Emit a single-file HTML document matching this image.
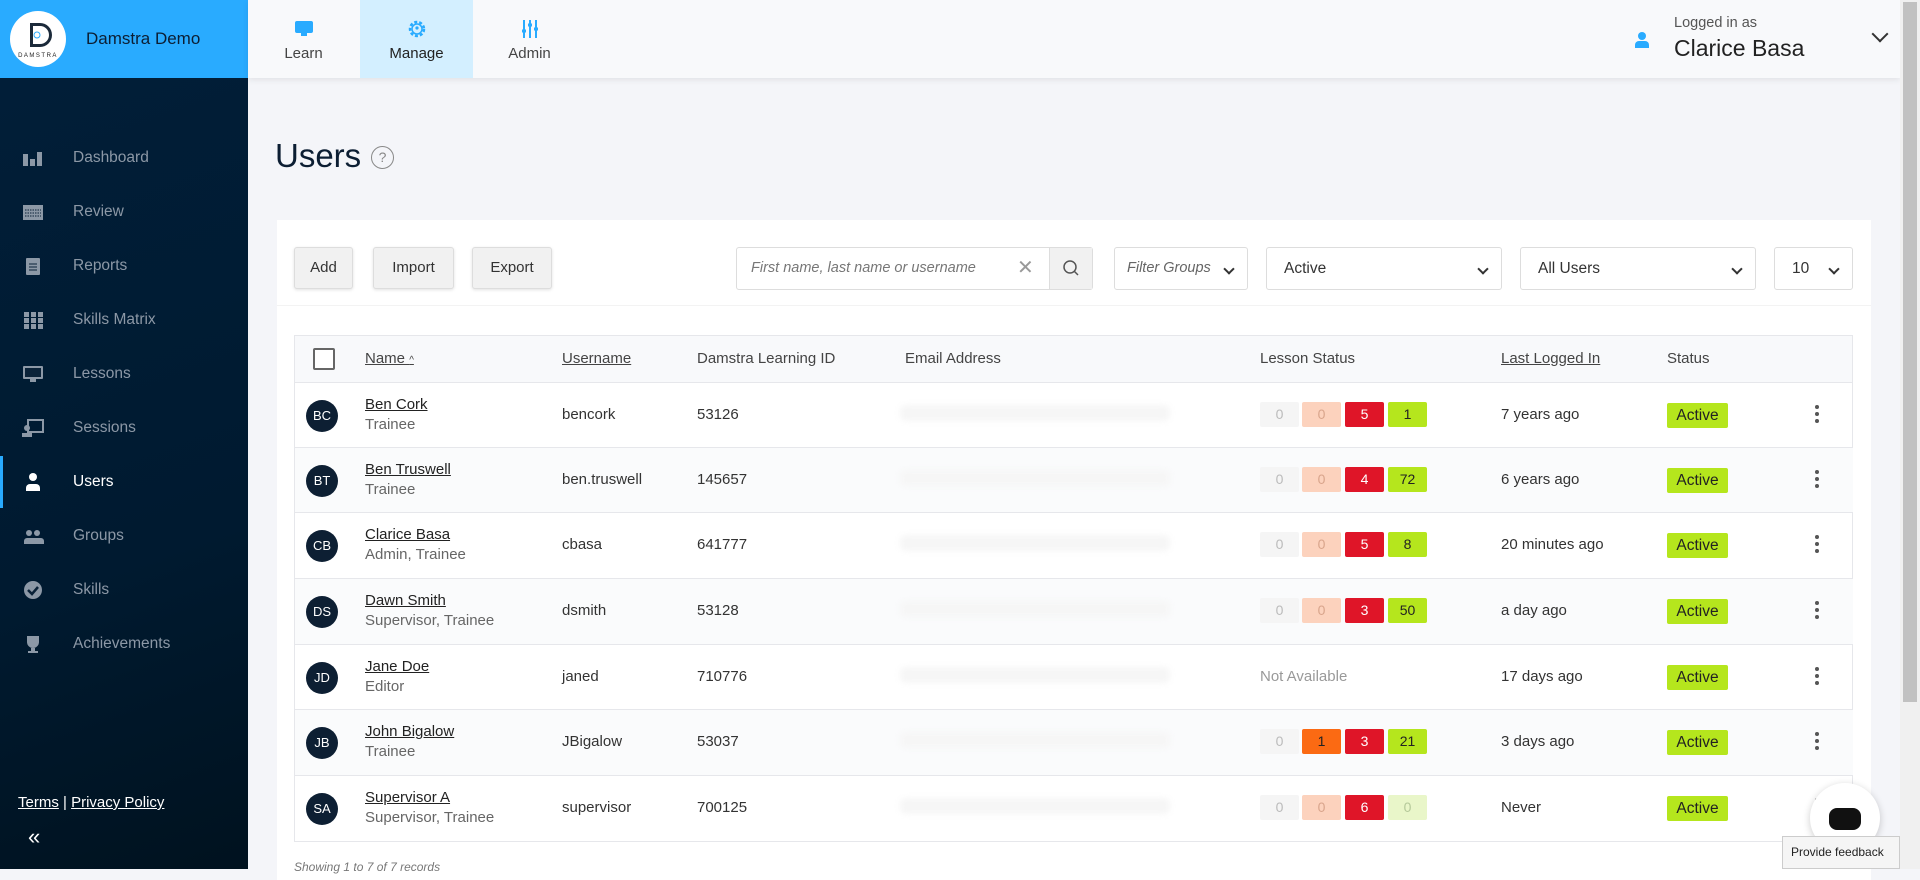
<!DOCTYPE html>
<html><head><meta charset="utf-8"><style>
*{box-sizing:border-box;margin:0;padding:0}
body{width:1920px;height:869px;overflow:hidden;font-family:"Liberation Sans",sans-serif;background:#f4f5f9;position:relative;color:#333}
.abs{position:absolute}
#logo{left:0;top:0;width:248px;height:78px;background:#29abff}
#side{left:0;top:78px;width:248px;height:791px;background:linear-gradient(160deg,#011e38,#001a30 60%,#00121f)}
#top{left:248px;top:0;width:1652px;height:78px;background:#f8f9fb;box-shadow:0 2px 6px rgba(0,0,0,.08)}
.tab{position:absolute;top:0;height:78px;text-align:center;font-size:15px;color:#444}
.tab svg{display:block;margin:19px auto 6px}
.nav{position:absolute;left:0;width:248px;height:52px;font-size:15.5px;color:#8c98a6}
.nav span{position:absolute;left:73px;top:50%;transform:translateY(-50%)}
.nav i{position:absolute;left:22px;top:50%;transform:translateY(-50%);width:22px;height:18px;display:block}
.btn{position:absolute;top:247px;height:42px;background:#f1f1f1;border:1px solid #ddd;border-radius:3px;font-size:15px;text-align:center;line-height:40px;color:#333;box-shadow:0 1px 3px rgba(0,0,0,.12)}
.sel{position:absolute;top:247px;height:43px;background:#fff;border:1px solid #ddd;border-radius:3px;font-size:15.5px;line-height:41px;padding-left:17px;color:#333}
.sel:after{content:"";position:absolute;right:14px;top:17px;width:6px;height:6px;border-right:2px solid #333;border-bottom:2px solid #333;transform:rotate(45deg)}
.row{position:absolute;left:295px;width:1558px;height:66px;border-top:1px solid #e6e7eb;font-size:15px;color:#333}
.row div{position:absolute}
.av{left:11px;top:17px;width:32px;height:32px;border-radius:50%;background:#0d1f33;color:#fff;font-size:13px;text-align:center;line-height:32px}
.nm{left:70px;top:13px;text-decoration:underline;color:#222}
.rl{left:70px;top:33px;color:#666}
.mid{top:23px}
.blur{left:605px;top:22px;width:270px;height:16px;background:#f6f6f6;border-radius:6px;filter:blur(3px)}
.b{top:19px;width:39px;height:25px;border-radius:2px;font-size:14px;text-align:center;line-height:25px}
.b0{background:#f5f5f5;color:#bbb}.b1{background:#fcd2bd;color:#d9a58c}.b2{background:#df1528;color:#fff}.b3{background:#b5e61d;color:#222}.b4{background:#e9f6c9;color:#b5c99a}.bo{background:#fb6a13;color:#222}
.act{left:1372px;top:20px;width:61px;height:25px;background:#b5e61d;color:#222;border-radius:2px;text-align:center;line-height:25px;font-size:15.5px}
.dots{left:1520px;top:22px;width:4px}
.dots b{display:block;width:4px;height:4px;border-radius:50%;background:#555;margin-bottom:3px}
</style></head><body>
<div class="abs" id="logo">
 <div class="abs" style="left:10px;top:11px;width:56px;height:56px;border-radius:50%;background:#fff">
  <svg width="56" height="56" viewBox="0 0 56 56"><path d="M20 12h10a12 12 0 0 1 0 24h-10z M23 15v18h7a9 9 0 0 0 0-18z" fill="#1b2a3a" fill-rule="evenodd"/><circle cx="27" cy="24" r="3" fill="none" stroke="#29abff"/><text x="28" y="46" font-size="6" text-anchor="middle" font-family="Liberation Sans" letter-spacing="1.5" fill="#222">DAMSTRA</text></svg>
 </div>
 <div class="abs" style="left:86px;top:29px;font-size:17px;color:#0c1e33">Damstra Demo</div>
</div>
<div class="abs" id="top">
 <div class="tab" style="left:0;width:111px"><svg width="20" height="20" viewBox="0 0 20 20"><rect x="1" y="2" width="18" height="12" rx="2" fill="#29abff"/><rect x="7" y="14" width="6" height="3" fill="#29abff"/></svg>Learn</div>
 <div class="tab" style="left:112px;width:113px;background:#d3efff;color:#222"><svg width="20" height="20" viewBox="0 0 20 20"><circle cx="10" cy="10" r="7" fill="none" stroke="#29abff" stroke-width="2.5" stroke-dasharray="3 2"/><circle cx="10" cy="10" r="5" fill="none" stroke="#29abff" stroke-width="1.5"/><circle cx="10" cy="9" r="1.6" fill="#29abff"/></svg>Manage</div>
 <div class="tab" style="left:225px;width:113px"><svg width="20" height="20" viewBox="0 0 20 20" stroke="#29abff" stroke-width="2"><path d="M4 1v18M10 1v18M16 1v18"/><path d="M2 12h4M8 6h4M14 10h4" stroke-width="3"/></svg>Admin</div>
 <svg class="abs" style="left:1387px;top:32px" width="14" height="16" viewBox="0 0 14 16"><circle cx="7" cy="4" r="4" fill="#29abff"/><path d="M0 16v-3a4 4 0 0 1 4-4h6a4 4 0 0 1 4 4v3z" fill="#29abff"/></svg>
 <div class="abs" style="left:1426px;top:15px;font-size:14.5px;color:#555">Logged in as</div>
 <div class="abs" style="left:1426px;top:35px;font-size:23px;color:#222">Clarice Basa</div>
 <div class="abs" style="left:1626px;top:28px;width:12px;height:12px;border-right:2px solid #333;border-bottom:2px solid #333;transform:rotate(45deg)"></div>
</div>
<div class="abs" style="left:1900px;top:0;width:20px;height:869px;background:#f0f0f0"><div style="position:absolute;left:3px;top:2px;width:14px;height:700px;background:#c1c1c1"></div></div>
<div class="abs" id="side">
 <div class="nav" style="top:54px"><i><svg width="22" height="18"><path d="M1 5h5v12H1zM8 10h5v7H8zM15 3h5v14h-5z" fill="#8c98a6"/></svg></i><span>Dashboard</span></div>
 <div class="nav" style="top:108px"><i><svg width="22" height="18"><rect x="1" y="2" width="20" height="15" fill="#8c98a6"/><path d="M3 7h16M3 10h16M3 13h16" stroke="#0a2238" stroke-dasharray="1.5 1"/></svg></i><span>Review</span></div>
 <div class="nav" style="top:162px"><i><svg width="22" height="18"><rect x="4" y="1" width="14" height="17" rx="1" fill="#8c98a6"/><path d="M7 7h8M7 10h8M7 13h8" stroke="#0a2238"/></svg></i><span>Reports</span></div>
 <div class="nav" style="top:216px"><i><svg width="22" height="18"><path d="M2 1h5v5H2zM9 1h5v5H9zM16 1h5v5h-5zM2 7h5v5H2zM9 7h5v5H9zM16 7h5v5h-5zM2 13h5v5H2zM9 13h5v5H9zM16 13h5v5h-5z" fill="#8c98a6"/></svg></i><span>Skills Matrix</span></div>
 <div class="nav" style="top:270px"><i><svg width="22" height="18"><rect x="1" y="1" width="20" height="13" rx="1" fill="#8c98a6"/><rect x="3" y="3" width="16" height="9" fill="#0a2238"/><rect x="8" y="14" width="6" height="3" fill="#8c98a6"/></svg></i><span>Lessons</span></div>
 <div class="nav" style="top:324px"><i><svg width="22" height="18"><rect x="6" y="1" width="15" height="12" fill="none" stroke="#8c98a6" stroke-width="2"/><circle cx="5" cy="9" r="3" fill="#8c98a6"/><path d="M0 18v-4h10v4z" fill="#8c98a6"/></svg></i><span>Sessions</span></div>
 <div class="nav" style="top:378px;color:#fff"><div style="position:absolute;left:0;top:0;width:3px;height:52px;background:#29abff"></div><i><svg width="22" height="18"><circle cx="11" cy="4" r="4" fill="#fff"/><path d="M4 18v-3a4 4 0 0 1 4-4h6a4 4 0 0 1 4 4v3z" fill="#fff"/></svg></i><span>Users</span></div>
 <div class="nav" style="top:432px"><i><svg width="22" height="18"><circle cx="7" cy="6" r="3" fill="#8c98a6"/><circle cx="15" cy="6" r="3" fill="#8c98a6"/><path d="M2 17v-3a3 3 0 0 1 3-3h14a3 3 0 0 1 3 3v3z" fill="#8c98a6"/></svg></i><span>Groups</span></div>
 <div class="nav" style="top:486px"><i><svg width="22" height="18"><circle cx="11" cy="9" r="9" fill="#8c98a6"/><path d="M6 9l4 4 6-7" stroke="#0a2238" stroke-width="2.5" fill="none"/></svg></i><span>Skills</span></div>
 <div class="nav" style="top:540px"><i><svg width="22" height="18"><path d="M5 1h12v6a6 6 0 0 1-12 0zM9 13h4v3h3v2H6v-2h3z" fill="#8c98a6"/></svg></i><span>Achievements</span></div>
 <div class="abs" style="left:18px;top:716px;font-size:15px;color:#fff"><u>Terms</u> | <u>Privacy Policy</u></div>
 <div class="abs" style="left:28px;top:746px;font-size:22px;color:#fff">«</div>
</div>
<div class="abs" style="left:275px;top:137px;font-size:33px;color:#0c1e33">Users</div>
<div class="abs" style="left:371px;top:146px;width:23px;height:23px;border:1.5px solid #888;border-radius:50%;font-size:14px;color:#888;text-align:center;line-height:20px">?</div>
<div class="abs" style="left:277px;top:220px;width:1594px;height:660px;background:#fff"></div>
<div class="abs" style="left:277px;top:305px;width:1594px;height:1px;background:#f3f3f3"></div>
<div class="btn" style="left:294px;width:59px">Add</div>
<div class="btn" style="left:373px;width:81px">Import</div>
<div class="btn" style="left:472px;width:80px">Export</div>
<div class="abs" style="left:736px;top:247px;width:357px;height:43px;background:#fff;border:1px solid #ddd;border-radius:3px;font-size:14.5px;line-height:41px;padding-left:14px;font-style:italic;color:#777">First name, last name or username
 <span style="position:absolute;left:280px;top:0;font-size:20px;color:#999;font-style:normal">✕</span>
 <div style="position:absolute;right:0;top:0;width:43px;height:41px;background:#f1f1f1;border-left:1px solid #ddd"><svg width="43" height="41"><circle cx="20" cy="19" r="6" fill="none" stroke="#555" stroke-width="1.5"/><path d="M24 23l4 4" stroke="#555" stroke-width="1.5"/></svg></div>
</div>
<div class="sel" style="left:1114px;width:134px;font-style:italic;color:#666;font-size:14.5px;padding-left:12px">Filter Groups</div>
<div class="sel" style="left:1266px;width:236px">Active</div>
<div class="sel" style="left:1520px;width:236px">All Users</div>
<div class="sel" style="left:1774px;width:79px">10</div>
<div class="abs" style="left:294px;top:335px;width:1559px;height:507px;border:1px solid #e6e7eb"></div>
<div class="abs" style="left:295px;top:336px;width:1557px;height:46px;background:#f8f9fb;font-size:15px;color:#444">
 <div class="abs" style="left:18px;top:12px;width:22px;height:22px;border:2px solid #666;border-radius:2px;background:#fff"></div>
 <div class="abs" style="left:70px;top:14px;text-decoration:underline">Name <span style="font-size:10px;text-decoration:none">^</span></div>
 <div class="abs" style="left:267px;top:14px;text-decoration:underline">Username</div>
 <div class="abs" style="left:402px;top:14px">Damstra Learning ID</div>
 <div class="abs" style="left:610px;top:14px">Email Address</div>
 <div class="abs" style="left:965px;top:14px">Lesson Status</div>
 <div class="abs" style="left:1206px;top:14px;text-decoration:underline">Last Logged In</div>
 <div class="abs" style="left:1372px;top:14px">Status</div>
</div>

<div class="row" style="top:382px"><div class="av">BC</div><div class="nm">Ben Cork</div><div class="rl">Trainee</div><div class="mid" style="left:267px">bencork</div><div class="mid" style="left:402px">53126</div><div class="blur"></div><div class="b b0" style="left:965px">0</div><div class="b b1" style="left:1007px">0</div><div class="b b2" style="left:1050px">5</div><div class="b b3" style="left:1093px">1</div><div class="mid" style="left:1206px">7 years ago</div><div class="act">Active</div><div class="dots"><b></b><b></b><b></b></div></div>
<div class="row" style="top:447px;background:#fafbfc"><div class="av">BT</div><div class="nm">Ben Truswell</div><div class="rl">Trainee</div><div class="mid" style="left:267px">ben.truswell</div><div class="mid" style="left:402px">145657</div><div class="blur"></div><div class="b b0" style="left:965px">0</div><div class="b b1" style="left:1007px">0</div><div class="b b2" style="left:1050px">4</div><div class="b b3" style="left:1093px">72</div><div class="mid" style="left:1206px">6 years ago</div><div class="act">Active</div><div class="dots"><b></b><b></b><b></b></div></div>
<div class="row" style="top:512px"><div class="av">CB</div><div class="nm">Clarice Basa</div><div class="rl">Admin, Trainee</div><div class="mid" style="left:267px">cbasa</div><div class="mid" style="left:402px">641777</div><div class="blur"></div><div class="b b0" style="left:965px">0</div><div class="b b1" style="left:1007px">0</div><div class="b b2" style="left:1050px">5</div><div class="b b3" style="left:1093px">8</div><div class="mid" style="left:1206px">20 minutes ago</div><div class="act">Active</div><div class="dots"><b></b><b></b><b></b></div></div>
<div class="row" style="top:578px;background:#fafbfc"><div class="av">DS</div><div class="nm">Dawn Smith</div><div class="rl">Supervisor, Trainee</div><div class="mid" style="left:267px">dsmith</div><div class="mid" style="left:402px">53128</div><div class="blur"></div><div class="b b0" style="left:965px">0</div><div class="b b1" style="left:1007px">0</div><div class="b b2" style="left:1050px">3</div><div class="b b3" style="left:1093px">50</div><div class="mid" style="left:1206px">a day ago</div><div class="act">Active</div><div class="dots"><b></b><b></b><b></b></div></div>
<div class="row" style="top:644px"><div class="av">JD</div><div class="nm">Jane Doe</div><div class="rl">Editor</div><div class="mid" style="left:267px">janed</div><div class="mid" style="left:402px">710776</div><div class="blur"></div><div class="mid" style="left:965px;color:#999">Not Available</div><div class="mid" style="left:1206px">17 days ago</div><div class="act">Active</div><div class="dots"><b></b><b></b><b></b></div></div>
<div class="row" style="top:709px;background:#fafbfc"><div class="av">JB</div><div class="nm">John Bigalow</div><div class="rl">Trainee</div><div class="mid" style="left:267px">JBigalow</div><div class="mid" style="left:402px">53037</div><div class="blur"></div><div class="b b0" style="left:965px">0</div><div class="b bo" style="left:1007px">1</div><div class="b b2" style="left:1050px">3</div><div class="b b3" style="left:1093px">21</div><div class="mid" style="left:1206px">3 days ago</div><div class="act">Active</div><div class="dots"><b></b><b></b><b></b></div></div>
<div class="row" style="top:775px"><div class="av">SA</div><div class="nm">Supervisor A</div><div class="rl">Supervisor, Trainee</div><div class="mid" style="left:267px">supervisor</div><div class="mid" style="left:402px">700125</div><div class="blur"></div><div class="b b0" style="left:965px">0</div><div class="b b1" style="left:1007px">0</div><div class="b b2" style="left:1050px">6</div><div class="b b4" style="left:1093px">0</div><div class="mid" style="left:1206px">Never</div><div class="act">Active</div><div class="dots"><b></b><b></b><b></b></div></div>
<div class="abs" style="left:294px;top:860px;font-size:12px;font-style:italic;color:#777">Showing 1 to 7 of 7 records</div>
<div class="abs" style="left:1810px;top:783px;width:70px;height:70px;border-radius:50%;background:#fff;box-shadow:0 2px 8px rgba(0,0,0,.2)"><div style="position:absolute;left:19px;top:25px;width:32px;height:22px;border-radius:8px;background:#111"></div></div>
<div class="abs" style="left:1782px;top:836px;width:118px;height:33px;background:#f5f5f5;border:1px solid #ccc;font-size:12px;color:#222;padding:8px 0 0 8px">Provide feedback</div>
</body></html>
